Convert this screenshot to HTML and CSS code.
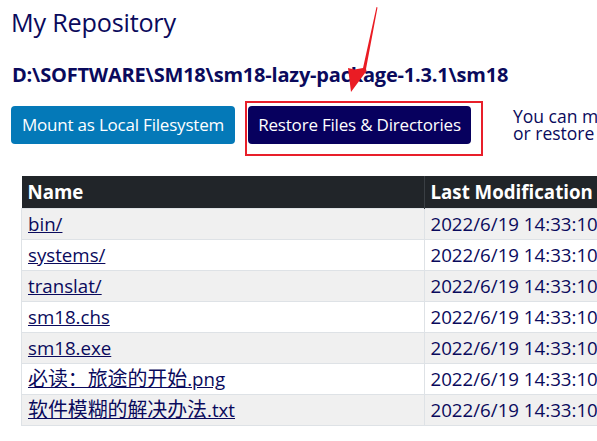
FILE: index.html
```html
<!DOCTYPE html>
<html lang="zh">
<head>
<meta charset="utf-8">
<title>My Repository</title>
<link rel="stylesheet" href="styles.css">
</head>
<body>
<div class="page">
  <h1 class="title">My Repository</h1>
  <h4 class="path">D:\SOFTWARE\SM18\sm18-lazy-package-1.3.1\sm18</h4>
  <div class="actions">
    <button class="btn btn-mount">Mount as Local Filesystem</button>
    <div class="highlight">
      <button class="btn btn-restore">Restore Files &amp; Directories</button>
    </div>
    <p class="hint">You can mount this repository as a local filesystem<br>or restore files and directories from it.</p>
  </div>
  <table class="files">
    <thead>
      <tr><th class="col-name">Name</th><th class="col-date">Last Modification</th></tr>
    </thead>
    <tbody>
      <tr><td><a href="#">bin/</a></td><td>2022/6/19 14:33:10</td></tr>
      <tr><td><a href="#">systems/</a></td><td>2022/6/19 14:33:10</td></tr>
      <tr><td><a href="#">translat/</a></td><td>2022/6/19 14:33:10</td></tr>
      <tr><td><a href="#">sm18.chs</a></td><td>2022/6/19 14:33:10</td></tr>
      <tr><td><a href="#">sm18.exe</a></td><td>2022/6/19 14:33:10</td></tr>
      <tr><td><a href="#"><span class="cjk">必读：旅途的开始</span>.png</a></td><td>2022/6/19 14:33:10</td></tr>
      <tr><td><a href="#"><span class="cjk">软件模糊的解决办法</span>.txt</a></td><td>2022/6/19 14:33:10</td></tr>
    </tbody>
  </table>
</div>
<svg class="arrow" width="60" height="100" viewBox="0 0 60 100" aria-hidden="true">
  <path d="M46.5 7 L47.5 7.5 L36 69 L36.5 71 L21 92 L18 68 L24.5 69.5 L33 68 Z" fill="#ea1c24"/>
</svg>
</body>
</html>
```

FILE: styles.css
```css
html, body {
  margin: 0;
  padding: 0;
  background: #fff;
  overflow: hidden;
}
body {
  font-family: "Open Sans", "Noto Sans", "Noto Sans CJK SC", sans-serif;
  color: #0a0a5c;
  width: 597px;
  height: 441px;
  position: relative;
}
.page {
  padding: 0 0 0 11px;
  width: 1000px;
}
.title {
  margin: 0;
  padding-top: 5px;
  font-size: 25.2px;
  font-weight: 400;
  line-height: 34px;
  letter-spacing: -0.2px;
}
.path {
  margin: 25px 0 0 1px;
  font-size: 20px;
  font-weight: 700;
  line-height: 22px;
  letter-spacing: -0.2px;
}
.actions {
  display: flex;
  align-items: flex-start;
  margin-top: 15px;
}
.btn {
  font-family: inherit;
  font-size: 17px;
  line-height: 22px;
  height: 38px;
  padding: 0 8px;
  border: none;
  border-radius: 4px;
  color: #fff;
  letter-spacing: -0.2px;
  white-space: nowrap;
}
.btn-mount {
  background: #0479b8;
  width: 224px;
  margin-top: 5px;
}
.highlight {
  margin-left: 10px;
  border: 2px solid #e81f2a;
  padding: 3px 10px 10px 1px;
}
.btn-restore {
  background: #07005e;
  width: 223px;
  display: block;
}
.hint {
  margin: 7px 0 0 30px;
  font-size: 17.5px;
  line-height: 17px;
  white-space: nowrap;
}
.files {
  margin: 20px 0 0 10px;
  border-collapse: collapse;
  font-size: 18.7px;
}
.files th {
  background: #212529;
  color: #fff;
  font-weight: 700;
  text-align: left;
  height: 32px;
  padding: 0 6px;
  border-left: 1px solid #3a3f44;
  line-height: 30px;
}
.files th.col-name {
  width: 390px;
  border-left: none;
}
.files th.col-date {
  width: 400px;
}
.files td {
  height: 30px;
  padding: 0 6px;
  border: 1px solid #dee2e6;
  line-height: 30px;
}
.files tbody tr:nth-child(odd) td {
  background: #f0f0f0;
}
.files a {
  color: #0a0a5c;
  text-decoration: underline;
}
.files .cjk {
  font-size: 19.9px;
}
.arrow {
  position: absolute;
  left: 330px;
  top: 0;
}
```
